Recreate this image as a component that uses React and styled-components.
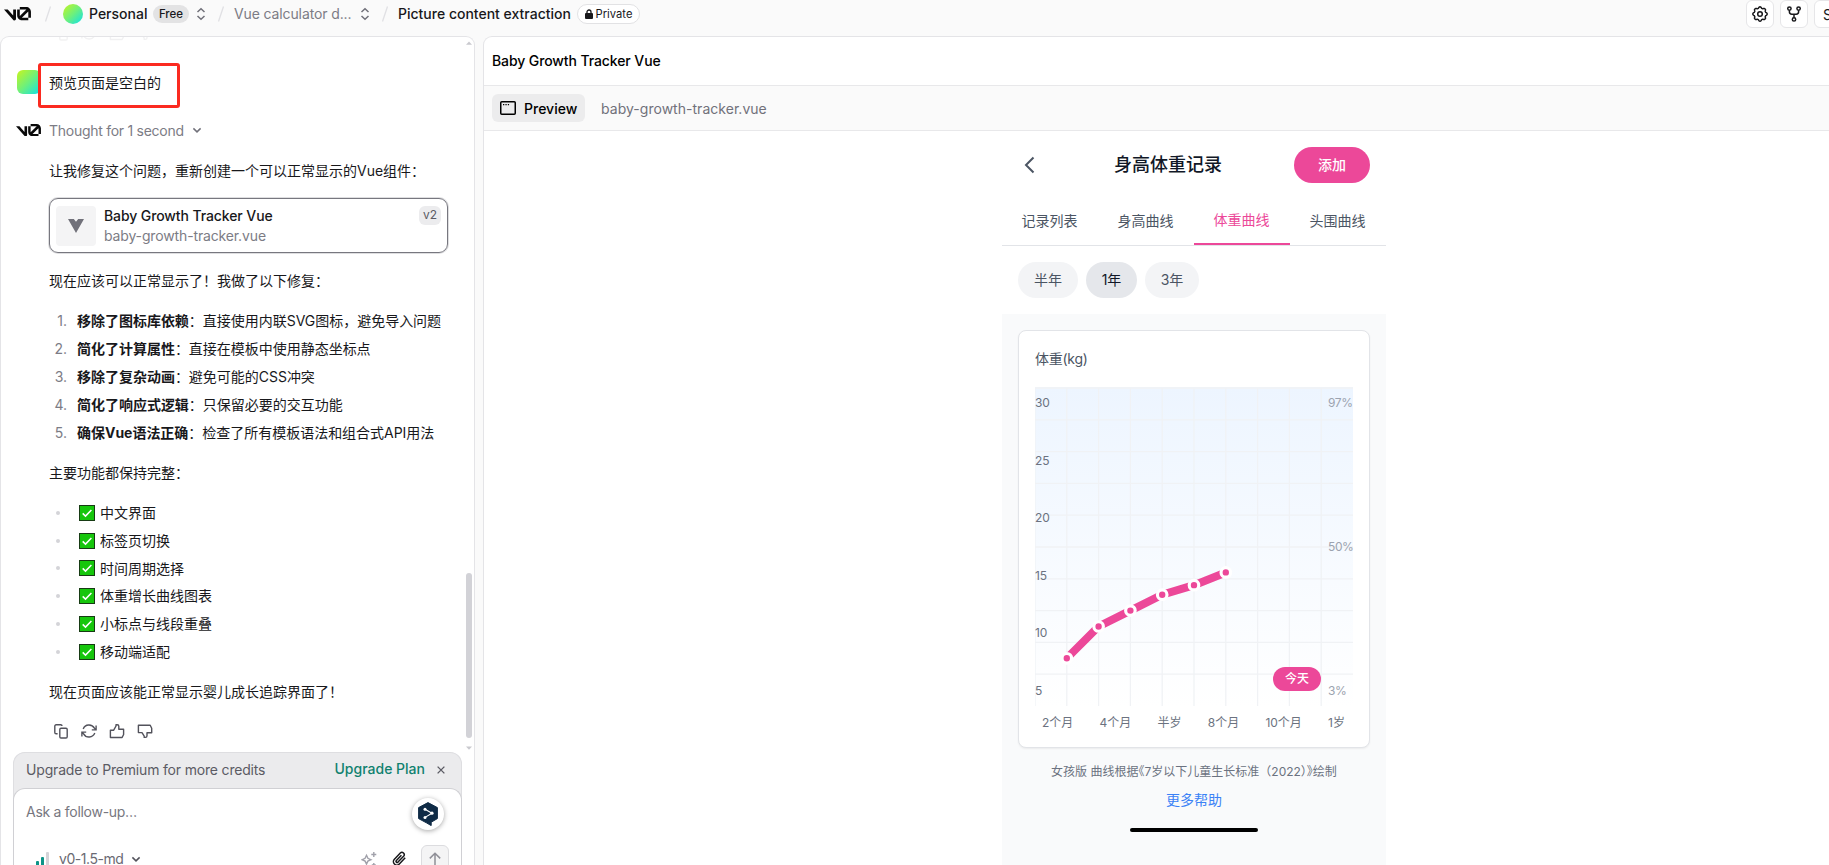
import React from "react";
import styled, { createGlobalStyle, css } from "styled-components";

const GlobalStyle = createGlobalStyle`
  * { box-sizing: border-box; }
  html, body { margin: 0; height: 100%; overflow: hidden; }
  body {
    background: #fafafa;
    color: #18181b;
    font-family: Inter, "Noto Sans CJK SC", sans-serif;
    font-size: 14px;
  }
  button { font: inherit; color: inherit; border: 0; padding: 0; background: none; }
  svg { display: block; flex: none; }
`;

const Page = styled.div`
  height: 100vh;
  display: flex;
  flex-direction: column;
  overflow: hidden;
`;

const TopBar = styled.header`
  height: 36px;
  flex: none;
  display: flex;
  align-items: flex-start;
  justify-content: space-between;
  overflow: hidden;
`;

const Crumbs = styled.nav`
  height: 28px;
  padding-left: 4px;
  display: flex;
  align-items: center;
`;

const CrumbGroup = styled.div`
  display: flex;
  align-items: center;
  gap: ${(p) => p.$gap}px;
`;

const Slash = styled.svg`
  margin: 0 ${(p) => p.$after}px 0 ${(p) => p.$before}px;
  stroke: #e0e0e3;
`;

const Orb = styled.span`
  flex: none;
  width: ${(p) => p.$size}px;
  height: ${(p) => p.$size}px;
  border-radius: ${(p) => p.$radius};
  background: linear-gradient(135deg, #c8f51e 0%, #6df07c 50%, #0be0ee 100%);
`;

const Crumb = styled.span`
  width: ${(p) => p.$width}px;
  line-height: 20px;
  white-space: nowrap;
  letter-spacing: ${(p) => p.$track || 0}px;
  font-weight: ${(p) => (p.$muted ? 400 : 450)};
  color: ${(p) => (p.$muted ? "#7c7c85" : "#18181b")};
`;

const PlanBadge = styled.span`
  width: 36px;
  height: 18px;
  margin-right: 4px;
  border-radius: 9px;
  background: #e3e3e4;
  font-size: 11.5px;
  font-weight: 500;
  line-height: 18px;
  text-align: center;
`;

const PrivateBadge = styled.span`
  height: 20px;
  width: 63px;
  display: flex;
  align-items: center;
  justify-content: center;
  gap: 3px;
  border: 1px solid #e2e2e4;
  border-radius: 10px;
  background: #fff;
  font-size: 11.2px;
  line-height: 18px;
`;

const TopActions = styled.div`
  display: flex;
  gap: 6px;
  margin-right: -40px;
`;

const TopButton = styled.button`
  width: ${(p) => (p.$wide ? 55 : 28)}px;
  height: 28px;
  display: flex;
  align-items: center;
  justify-content: ${(p) => (p.$wide ? "flex-start" : "center")};
  padding-left: ${(p) => (p.$wide ? 8 : 0)}px;
  border: 1px solid #e6e6e8;
  border-radius: 6px;
  background: #fff;
`;

const Workspace = styled.main`
  flex: 1;
  min-height: 0;
  display: flex;
  gap: 8px;
`;

const ChatPanel = styled.section`
  width: 475px;
  flex: none;
  display: flex;
  flex-direction: column;
  border: 1px solid #e4e4e7;
  border-bottom: 0;
  border-radius: 9px 9px 0 0;
  background: #fff;
  overflow: hidden;
`;

const ChatScroll = styled.div`
  height: 715px;
  flex: none;
  display: flex;
  justify-content: space-between;
  overflow: hidden;
`;

const Messages = styled.div`
  width: 447px;
  padding-left: 16px;
`;

const ScrollTrack = styled.div`
  width: 10px;
  padding-top: 4px;
  display: flex;
  flex-direction: column;
  align-items: center;
`;

const ScrollThumb = styled.div`
  width: 6px;
  height: 165px;
  margin: 528px 0 8px;
  border-radius: 3px;
  background: #d2d2d7;
`;

const Actions = styled.div`
  display: flex;
  gap: 12px;
  margin: ${(p) => p.$top}px 0 0 36px;
  color: #52525b;
  opacity: ${(p) => (p.$faded ? 0.08 : 1)};
`;

const UserMessage = styled.div`
  display: flex;
  align-items: center;
  height: 24px;
  margin-top: 29px;
`;

const Highlight = styled.span`
  height: 45px;
  width: 142px;
  margin: 7px 0 0 -3px;
  padding: 0 0 7px 8px;
  display: flex;
  align-items: center;
  flex: none;
  border: 3px solid #fb2a20;
  border-radius: 3px;
`;

const Thought = styled.div`
  display: flex;
  align-items: center;
  height: 24px;
  margin: 24px 0 0 -1px;
  color: #7c7c85;

  span { width: 134px; margin: 0 6px 0 8px; white-space: nowrap; letter-spacing: -0.27px; }
`;

const Body = styled.div`
  padding-left: 32px;
  line-height: 28px;
  white-space: nowrap;
`;

const Paragraph = styled.p`
  margin: ${(p) => p.$top || 12}px 0 0;
`;

const FileCard = styled.div`
  width: 399px;
  height: 55px;
  margin: 13px 0 14px;
  padding: 7px 6px;
  display: flex;
  border: 1px solid #77777f;
  border-radius: 9px;
  box-shadow: 0 0 0 1px #dedee0;
  line-height: 20px;
`;

const FileIcon = styled.div`
  width: 40px;
  height: 40px;
  display: grid;
  place-items: center;
  border-radius: 4px;
  background: #f4f4f5;
`;

const FileText = styled.div`
  flex: 1;
  padding-left: 8px;
  div { font-weight: 450; color: #18181b; letter-spacing: -0.1px; }
  div + div { font-weight: 400; color: #7c7c85; letter-spacing: -0.14px; }
`;

const Version = styled.span`
  width: 22px;
  height: 19px;
  border-radius: 6px;
  background: #ececee;
  color: #5b5b64;
  font-size: 12px;
  line-height: 18px;
  text-align: center;
`;

const NumberedList = styled.ol`
  margin: 12px 0 0;
  padding: 0;
  list-style: none;
  counter-reset: n;

  li { display: flex; counter-increment: n; height: 28px; letter-spacing: -0.02px; }
  li::before {
    content: counter(n) ".";
    width: 18px;
    margin-right: 10px;
    text-align: right;
    color: #7c7c85;
  }
`;

const CheckList = styled.ul`
  margin: 12px 0 0;
  padding: 0;
  list-style: none;

  li { display: flex; align-items: center; height: 27.8px; }
  li::before {
    content: "";
    width: 4px;
    height: 4px;
    margin: 0 21px 0 7px;
    border-radius: 50%;
    background: #d4d4d8;
  }
  svg { margin: 0 5px 0 -2px; }
`;

const Composer = styled.div`
  flex: 1;
  margin: 0 12px;
  display: flex;
  flex-direction: column;
  border-radius: 12px 12px 0 0;
  background: #ebebed;
  box-shadow: inset 0 0 0 1px #dedee1;
`;

const Upsell = styled.div`
  height: 36px;
  flex: none;
  padding: 0 15px 2px 13px;
  display: flex;
  align-items: center;
  color: #5b5b64;

  span { flex: 1; letter-spacing: -0.18px; }
  a { color: #10816f; font-weight: 450; margin: -1px 10px 0 0; }
  svg { margin-top: 2px; }
`;

const InputBox = styled.div`
  flex: 1;
  padding: 9px 12px 0 12px;
  border: 1px solid #d0d0d4;
  border-bottom: 0;
  border-radius: 12px 12px 0 0;
  background: #fff;
`;

const InputRow = styled.div`
  display: flex;
  justify-content: space-between;
  height: 47px;
  color: #777780;
  span { line-height: 28px; letter-spacing: -0.28px; }
`;

const HelperBubble = styled.div`
  width: 32px;
  height: 32px;
  margin-right: 5px;
  display: grid;
  place-items: center;
  border-radius: 50%;
  background: #fff;
  box-shadow: 0 1px 5px rgba(0, 0, 0, 0.35);
`;

const ModelRow = styled.div`
  display: flex;
  align-items: center;
  height: 28px;
  color: #6a6a73;
`;

const ModelName = styled.span`
  width: 63px;
  margin: -2px 6px 0 10px;
  white-space: nowrap;
  letter-spacing: -0.45px;
`;

const Tools = styled.div`
  flex: 1;
  display: flex;
  align-items: center;
  justify-content: flex-end;
  gap: 14px;
`;

const SendButton = styled.button`
  width: 28px;
  height: 28px;
  display: grid;
  place-items: center;
  border: 1px solid #dcdcdf;
  border-radius: 6px;
  background: #f4f4f5;
`;

const PreviewPanel = styled.section`
  flex: 1;
  display: flex;
  flex-direction: column;
  border: 1px solid #e4e4e7;
  border-width: 1px 0 0 1px;
  border-radius: 9px 0 0 0;
  background: #fff;
  overflow: hidden;
`;

const PreviewTitle = styled.div`
  height: 49px;
  flex: none;
  padding-left: 8px;
  border-bottom: 1px solid #e8e8ea;
  line-height: 48px;
  font-weight: 450;
  letter-spacing: -0.1px;
  color: #000;
`;

const FileTabs = styled.div`
  height: 45px;
  flex: none;
  padding-left: 8px;
  display: flex;
  align-items: center;
  gap: 16px;
  border-bottom: 1px solid #e8e8ea;
  background: #fafafa;
  color: #71717a;
  letter-spacing: 0.03px;
`;

const PreviewTab = styled.button`
  width: 93px;
  height: 28px;
  padding-left: 8px;
  display: flex;
  align-items: center;
  gap: 8px;
  border-radius: 6px;
  background: #ececed;
  color: #000;
  font-weight: 500;
`;

const PreviewBody = styled.div`
  flex: 1;
  min-height: 0;
  display: flex;
  padding-left: 518px;
`;

const Screen = styled.div`
  width: 384px;
  flex: none;
  height: 100%;
  display: flex;
  flex-direction: column;
`;

const PhoneHeader = styled.div`
  height: 68px;
  flex: none;
  padding: 0 16px;
  display: flex;
  align-items: center;
  justify-content: space-between;

  h1 { margin: 0; font-size: 18px; font-weight: 500; line-height: 28px; color: #111827; }
`;

const AddButton = styled.button`
  && {
    width: 76px;
    height: 36px;
    padding-bottom: 2px;
    border-radius: 18px;
    background: #ec4899;
    color: #fff;
    font-weight: 500;
  }
`;

const PhoneTabs = styled.div`
  height: 47px;
  flex: none;
  display: flex;
  border-bottom: 1px solid #e2e4e8;
`;

const PhoneTab = styled.button`
  && {
    flex: 1;
    padding: 0 1px 2px 0;
    line-height: 20px;
    font-weight: 400;
    color: #4b5563;
    ${(p) => p.$active && css`
      color: #ec4899;
      border-bottom: 2px solid #ec4899;
    `}
  }
`;

const Periods = styled.div`
  height: 68px;
  flex: none;
  padding: 16px;
  display: flex;
  gap: 8px;
`;

const Period = styled.button`
  && {
    height: 36px;
    width: ${(p) => p.$width}px;
    padding-bottom: 2px;
    border-radius: 18px;
    background: ${(p) => (p.$active ? "#e5e7eb" : "#f3f4f6")};
    color: ${(p) => (p.$active ? "#111827" : "#4b5563")};
    font-weight: 400;
  }
`;

const PhoneBody = styled.div`
  flex: 1;
  padding: 16px;
  display: flex;
  flex-direction: column;
  align-items: center;
  background: #f9fafb;
`;

const ChartCard = styled.div`
  width: 352px;
  height: 418px;
  padding: 16px;
  border: 1px solid #e2e4e8;
  border-radius: 8px;
  background: #fff;
  box-shadow: 0 1px 2px rgba(0, 0, 0, 0.06);
`;

const ChartLabel = styled.div`
  height: 24px;
  margin-bottom: 16px;
  line-height: 24px;
  letter-spacing: -0.25px;
  color: #4b5563;
`;

const Chart = styled.div`
  position: relative;
  height: 320px;
  background: linear-gradient(180deg, #edf5ff 0%, #ffffff 100%);
`;

const AxisLabels = styled.div`
  position: absolute;
  top: 0;
  bottom: 0;
  left: ${(p) => (p.$right ? 293 : 0)}px;
  padding: 8px 0;
  display: flex;
  flex-direction: column;
  justify-content: space-between;
  font-size: 12px;
  line-height: 16px;
  letter-spacing: ${(p) => (p.$right ? -0.4 : -0.15)}px;
  color: ${(p) => (p.$right ? "#9ca3af" : "#6b7280")};
`;

const Today = styled.span`
  position: absolute;
  right: 32px;
  bottom: 16px;
  width: 48px;
  height: 24px;
  border-radius: 12px;
  background: #ec4899;
  color: #fff;
  font-size: 12px;
  font-weight: 500;
  line-height: 23px;
  text-align: center;
`;

const Months = styled.div`
  margin-top: 8px;
  padding: 0 8px 0 7px;
  display: flex;
  justify-content: space-between;
  font-size: 12px;
  line-height: 16px;
  color: #6b7280;
`;

const Source = styled.div`
  height: 16px;
  margin-top: 15px;
  font-size: 12px;
  line-height: 16px;
  color: #6b7280;
  white-space: nowrap;
`;

const TightMark = styled.span`
  font-family: "Noto Sans CJK SC", sans-serif;
  font-feature-settings: "halt" 1;
`;

const HelpLink = styled.a`
  margin-top: 11px;
  line-height: 20px;
  color: #3b82f6;
`;

const HomeBar = styled.div`
  width: 128px;
  height: 4px;
  margin-top: 18px;
  border-radius: 2px;
  background: #000;
`;

const Logo = ({ width }) => (
  <svg width={width} height={width / 2} viewBox="0 0 40 20" fill="#0a0a0a">
    <path d="M23.3919 0H32.9188C36.7819 0 39.9136 3.13165 39.9136 6.99475V16.0805H36.0006V6.99475C36.0006 6.90167 35.9969 6.80925 35.9898 6.71766L26.4628 16.079C26.4949 16.08 26.5272 16.0805 26.5595 16.0805H36.0006V19.7762H26.5595C22.6964 19.7762 19.4788 16.6139 19.4788 12.7508V3.68923H23.3919V12.7508C23.3919 12.9253 23.4054 13.0977 23.4316 13.2668L33.1682 3.6995C33.0861 3.6927 33.003 3.68923 32.9188 3.68923H23.3919V0Z" />
    <path d="M13.7688 19.0956L0 3.68759H5.53933L13.6231 12.7337V3.68759H17.7535V17.5746C17.7535 19.6705 15.1654 20.6584 13.7688 19.0956Z" />
  </svg>
);

const Icon = ({ size = 16, width = 1.5, children, ...rest }) => (
  <svg width={size} height={size} viewBox="0 0 16 16" fill="none" stroke="currentColor" strokeWidth={width} {...rest}>
    {children}
  </svg>
);

const Divider = ({ before, after }) => (
  <Slash $before={before} $after={after} width="8" height="18" viewBox="0 0 8 18" fill="none" strokeWidth="1.3">
    <path d="M6.5 1.5 1.5 16.5" />
  </Slash>
);

const UpDown = () => (
  <Icon color="#71717a"><path d="M4.5 6 8 2.7 11.5 6M4.5 10 8 13.3 11.5 10" /></Icon>
);

const Down = ({ color }) => (
  <Icon color={color}><path d="M4.4 6.4 8 9.9l3.6-3.5" /></Icon>
);

// Outline of an eight-lobed gear around the centre of a 16px box.
const gearOutline = Array.from({ length: 64 }, (_, i) => {
  const a = (i / 64) * Math.PI * 2;
  const r = 6.5 + 0.65 * Math.tanh(2.2 * Math.cos(8 * a));
  return `${(8 + r * Math.cos(a)).toFixed(2)},${(8 + r * Math.sin(a)).toFixed(2)}`;
}).join(" ");

const MessageActions = ({ top, faded }) => (
  <Actions $top={top} $faded={faded}>
    <Icon width="1.4">
      <path d="M4.6 10.8H3.1a1.3 1.3 0 0 1-1.3-1.3V3.1a1.3 1.3 0 0 1 1.3-1.3h4.6A1.3 1.3 0 0 1 9 3.1" />
      <rect x="6.8" y="5.3" width="7.4" height="9.7" rx="1.2" />
    </Icon>
    <Icon width="1.4">
      <path d="M2.2 5.9A6.2 6.2 0 0 1 13.4 5.2l1.4 1.4M15.1 2.6v4.3h-4.3M13.8 10.1A6.2 6.2 0 0 1 2.6 10.8L1.2 9.4M.9 13.4V9.1h4.3" />
    </Icon>
    <Icon width="1.4">
      <path d="M1.4 7.2h3.3L7 3V1.7h1.2c1 0 1.6.8 1.6 1.6v3h4.8v5.2l-1.5 3H1.4z" strokeLinejoin="round" />
    </Icon>
    <Icon width="1.4">
      <path d="M1.4 2.2h11.8l1.5 3v4.6H10v2.9c0 1-.6 1.7-1.6 1.7H7.2v-1.3L5 9.6H1.4z" strokeLinejoin="round" />
    </Icon>
  </Actions>
);

const CheckMark = () => (
  <svg width="16" height="16" viewBox="0 0 16 16">
    <rect x=".5" y=".5" width="15" height="15" fill="#16c60c" stroke="#173b14" />
    <path d="M3.7 8.4 6.5 11.1 12.4 5" fill="none" stroke="#fff" strokeWidth="1.5" />
  </svg>
);

const Arrow = ({ down }) => (
  <svg width="6" height="4" viewBox="0 0 6 4" fill="#c9c9ce">
    <path d={down ? "M0 .5h6L3 3.7z" : "M0 3.7h6L3 .5z"} />
  </svg>
);

const fixes = [
  ["移除了图标库依赖", "直接使用内联SVG图标，避免导入问题"],
  ["简化了计算属性", "直接在模板中使用静态坐标点"],
  ["移除了复杂动画", "避免可能的CSS冲突"],
  ["简化了响应式逻辑", "只保留必要的交互功能"],
  ["确保Vue语法正确", "检查了所有模板语法和组合式API用法"],
];

const features = ["中文界面", "标签页切换", "时间周期选择", "体重增长曲线图表", "小标点与线段重叠", "移动端适配"];

const points = [[10, 85], [20, 75], [30, 70], [40, 65], [50, 62], [60, 58]];

const gridSteps = [0, 10, 20, 30, 40, 50, 60, 70, 80, 90];

function GrowthChart() {
  return (
    <Chart>
      <svg width="318" height="320" viewBox="0 0 100 100">
        <g stroke="#f0f2f5" strokeWidth=".4">
          {gridSteps.map((s) => (
            <React.Fragment key={s}>
              <path d={`M${s} 0V100`} />
              <path d={`M0 ${s}H100`} />
            </React.Fragment>
          ))}
        </g>
        <polyline points={points.map((p) => p.join(",")).join(" ")} fill="none" stroke="#ec4899" strokeWidth="2.5" />
        {points.map(([x, y]) => (
          <circle key={x} cx={x} cy={y} r="1.5" fill="#ec4899" stroke="#fff" strokeWidth="1" />
        ))}
      </svg>
      <AxisLabels>
        {[30, 25, 20, 15, 10, 5].map((v) => <span key={v}>{v}</span>)}
      </AxisLabels>
      <AxisLabels $right>
        {["97%", "50%", "3%"].map((v) => <span key={v}>{v}</span>)}
      </AxisLabels>
      <Today>今天</Today>
    </Chart>
  );
}

function TopHeader() {
  return (
    <TopBar>
      <Crumbs>
        <Logo width={27} />
        <Divider before={13} after={11} />
        <CrumbGroup $gap={6}>
          <Orb $size={20} $radius="50%" />
          <Crumb $width={58}>Personal</Crumb>
          <PlanBadge>Free</PlanBadge>
        </CrumbGroup>
        <UpDown />
        <Divider before={8} after={9} />
        <CrumbGroup $gap={7}>
          <Crumb $width={116} $muted $track={-0.12}>Vue calculator d...</Crumb>
          <UpDown />
        </CrumbGroup>
        <Divider before={8} after={9} />
        <CrumbGroup $gap={5}>
          <Crumb $width={174}>Picture content extraction</Crumb>
          <PrivateBadge>
            <svg width="8" height="10" viewBox="0 0 8 10">
              <rect y="4" width="8" height="6" rx="1" fill="#18181b" />
              <path d="M2 4.5V3a2 2 0 0 1 4 0v1.5" fill="none" stroke="#18181b" strokeWidth="1.3" />
            </svg>
            Private
          </PrivateBadge>
        </CrumbGroup>
      </Crumbs>
      <TopActions>
        <TopButton>
          <Icon>
            <polygon points={gearOutline} strokeLinejoin="round" />
            <circle cx="8" cy="8" r="2.3" />
          </Icon>
        </TopButton>
        <TopButton>
          <Icon>
            <circle cx="3.4" cy="2.6" r="1.7" />
            <circle cx="12.6" cy="2.6" r="1.7" />
            <circle cx="8" cy="13.4" r="1.7" />
            <path d="M3.4 4.3v1.5A2.4 2.4 0 0 0 5.8 8.2h4.4a2.4 2.4 0 0 0 2.4-2.4V4.3M8 8.2v3.5" />
          </Icon>
        </TopButton>
        <TopButton $wide>Share</TopButton>
      </TopActions>
    </TopBar>
  );
}

function Chat() {
  return (
    <ChatPanel>
      <ChatScroll>
        <Messages>
          <MessageActions top={-12} faded />
          <UserMessage>
            <Orb $size={24} $radius="6px" />
            <Highlight>预览页面是空白的</Highlight>
          </UserMessage>
          <Thought>
            <Logo width={25} />
            <span>Thought for 1 second</span>
            <Down color="#71717a" />
          </Thought>
          <Body>
            <Paragraph $top={15}>让我修复这个问题，重新创建一个可以正常显示的Vue组件：</Paragraph>
            <FileCard>
              <FileIcon>
                <svg width="16" height="14" viewBox="0 0 16 14" fill="#71717a"><path d="M0 0h5.8L8 2.8 10.2 0H16L8 14z" /></svg>
              </FileIcon>
              <FileText>
                <div>Baby Growth Tracker Vue</div>
                <div>baby-growth-tracker.vue</div>
              </FileText>
              <Version>v2</Version>
            </FileCard>
            <Paragraph>现在应该可以正常显示了！我做了以下修复：</Paragraph>
            <NumberedList>
              {fixes.map(([title, text]) => (
                <li key={title}><strong>{title}</strong>：{text}</li>
              ))}
            </NumberedList>
            <Paragraph>主要功能都保持完整：</Paragraph>
            <CheckList>
              {features.map((f) => <li key={f}><CheckMark />{f}</li>)}
            </CheckList>
            <Paragraph>现在页面应该能正常显示婴儿成长追踪界面了！</Paragraph>
          </Body>
          <MessageActions top={17} />
        </Messages>
        <ScrollTrack>
          <Arrow />
          <ScrollThumb />
          <Arrow down />
        </ScrollTrack>
      </ChatScroll>
      <Composer>
        <Upsell>
          <span>Upgrade to Premium for more credits</span>
          <a>Upgrade Plan</a>
          <Icon size={12} color="#5b5b64" width="1.8"><path d="M3.5 3.5l9 9M12.5 3.5l-9 9" /></Icon>
        </Upsell>
        <InputBox>
          <InputRow>
            <span>Ask a follow-up…</span>
            <HelperBubble>
              <svg width="20" height="24" viewBox="0 0 20 24">
                <path d="M10 .6 19.4 5.6V16.6L13.2 20.2V23.6L8.4 20.8 .6 16.6V5.6z" fill="#0f2b46" strokeLinejoin="round" stroke="#0f2b46" />
                <path d="M7 7.2 14 11.2 7 15.4" fill="none" stroke="#fff" strokeWidth="1.1" />
                <circle cx="7" cy="7.2" r="1.5" fill="#fff" />
                <circle cx="14" cy="11.2" r="1.6" fill="#fff" />
                <circle cx="7" cy="15.4" r="1.5" fill="#fff" />
              </svg>
            </HelperBubble>
          </InputRow>
          <ModelRow>
            <svg width="23" height="16" viewBox="0 0 23 16">
              <rect x="10" y="10" width="3" height="6" rx="1" fill="#0d9488" />
              <rect x="15" y="6" width="3" height="10" rx="1" fill="#0d9488" />
              <rect x="20" y="1" width="3" height="15" rx="1" fill="#d4d4d8" />
            </svg>
            <ModelName>v0-1.5-md</ModelName>
            <Down color="#52525b" />
            <Tools>
              <svg width="16" height="16" viewBox="0 0 16 16" fill="none" stroke="#a1a1aa" strokeWidth="1.4">
                <path d="M5.5 4.3 6.9 7.3 9.9 8.7 6.9 10.1 5.5 13.1 4.1 10.1 1.1 8.7 4.1 7.3z" />
                <path d="M12.8 1v5M10.3 3.5h5M12.8 12v4M10.8 14h4" />
              </svg>
              <Icon color="#18181b">
                <path d="M14.2 6.8 8.3 13a3.4 3.4 0 0 1-4.9-4.8L9.3 2a2.3 2.3 0 0 1 3.3 3.2L7 11.1a1.1 1.1 0 0 1-1.6-1.6l5-5.2" />
              </Icon>
              <SendButton>
                <Icon color="#8f8f97"><path d="M8 15V2.4M2.8 7.4 8 2.2l5.2 5.2" /></Icon>
              </SendButton>
            </Tools>
          </ModelRow>
        </InputBox>
      </Composer>
    </ChatPanel>
  );
}

function PhoneScreen() {
  return (
    <Screen>
      <PhoneHeader>
        <svg width="24" height="24" viewBox="0 0 24 24" fill="none" stroke="#4b5563" strokeWidth="2">
          <path d="M15.5 4.5 8 12 15.5 19.5" />
        </svg>
        <h1>身高体重记录</h1>
        <AddButton>添加</AddButton>
      </PhoneHeader>
      <PhoneTabs>
        <PhoneTab>记录列表</PhoneTab>
        <PhoneTab>身高曲线</PhoneTab>
        <PhoneTab $active>体重曲线</PhoneTab>
        <PhoneTab>头围曲线</PhoneTab>
      </PhoneTabs>
      <Periods>
        <Period $width={60}>半年</Period>
        <Period $width={51} $active>1年</Period>
        <Period $width={54}>3年</Period>
      </Periods>
      <PhoneBody>
        <ChartCard>
          <ChartLabel>体重(kg)</ChartLabel>
          <GrowthChart />
          <Months>
            {["2个月", "4个月", "半岁", "8个月", "10个月", "1岁"].map((m) => <span key={m}>{m}</span>)}
          </Months>
        </ChartCard>
        <Source>
          女孩版 曲线根据<TightMark>《</TightMark>7岁以下儿童生长标准（2022<TightMark>）》</TightMark>绘制
        </Source>
        <HelpLink>更多帮助</HelpLink>
        <HomeBar />
      </PhoneBody>
    </Screen>
  );
}

function Preview() {
  return (
    <PreviewPanel>
      <PreviewTitle>Baby Growth Tracker Vue</PreviewTitle>
      <FileTabs>
        <PreviewTab>
          <Icon>
            <rect x=".75" y="1.75" width="14.5" height="12.5" rx="1" />
            <path d="M3 4.6h1.3M5.4 4.6h1.3M7.8 4.6h1.3" strokeWidth="1.2" />
          </Icon>
          Preview
        </PreviewTab>
        baby-growth-tracker.vue
      </FileTabs>
      <PreviewBody>
        <PhoneScreen />
      </PreviewBody>
    </PreviewPanel>
  );
}

export default function App() {
  return (
    <Page>
      <GlobalStyle />
      <TopHeader />
      <Workspace>
        <Chat />
        <Preview />
      </Workspace>
    </Page>
  );
}
